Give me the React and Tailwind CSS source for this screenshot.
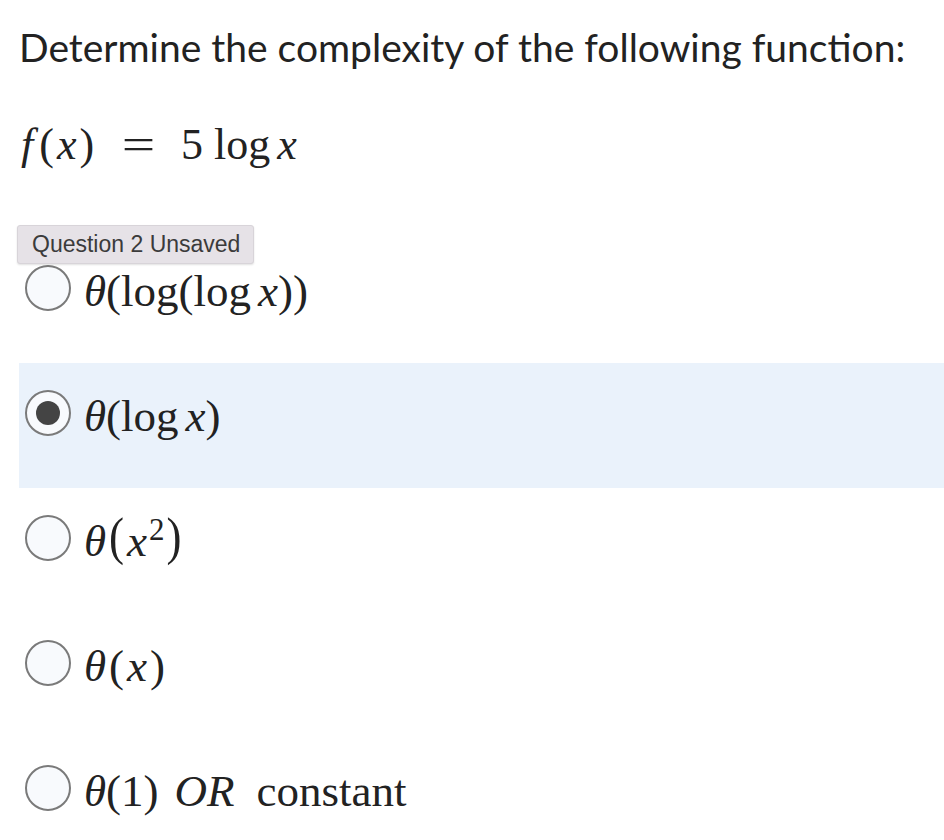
import React from 'react'

const serif = { fontFamily: '"Liberation Serif", "DejaVu Serif", serif' }

function V({ children }) {
  return <span className="italic">{children}</span>
}

function Radio({ checked }) {
  return (
    <span className="flex h-[46px] w-[46px] shrink-0 items-center justify-center rounded-full border-2 border-[#7a7a7a] bg-[#f8fafd]">
      {checked && <span className="h-[24px] w-[24px] rounded-full bg-[#444]" />}
    </span>
  )
}

const OPTIONS = [
  {
    id: 1,
    label: (
      <>
        <V>θ</V>(log(log<span className="ml-[7px]"><V>x</V></span>))
      </>
    )
  },
  {
    id: 2,
    checked: true,
    label: (
      <>
        <V>θ</V>(log<span className="ml-[7px]"><V>x</V></span>)
      </>
    )
  },
  {
    id: 3,
    label: (
      <>
        <V>θ</V>
        <span className="ml-[3px] inline-block origin-bottom scale-y-[1.18]">(</span>
        <span className="ml-[3px]"><V>x</V></span>
        <sup className="ml-[2px] mr-[2px] text-[31px]">2</sup>
        <span className="inline-block origin-bottom scale-y-[1.18]">)</span>
      </>
    )
  },
  {
    id: 4,
    label: (
      <>
        <V>θ</V><span className="ml-[3px]">(</span><span className="mx-[3px]"><V>x</V></span>)
      </>
    )
  },
  {
    id: 5,
    label: (
      <>
        <V>θ</V>(1)<span className="ml-[16px]"><V>OR</V></span>
        <span className="ml-[22px]">constant</span>
      </>
    )
  }
]

export default function App() {
  return (
    <div className="relative min-h-[840px] overflow-hidden bg-white pl-[19px] text-[#222]">
      <h1
        className="pt-[24px] text-[39px] leading-[1.2] text-[#222]"
        style={{ fontFamily: 'Lato, "Open Sans", sans-serif' }}
      >
        Determine the complexity of the following function:
      </h1>

      <div className="mt-[50px] flex items-baseline pl-[2px] text-[44px] leading-[48px]" style={serif}>
        <span>
          <V>f</V><span className="ml-[6px]">(</span><span className="mx-[3px]"><V>x</V></span>)
        </span>
        <span className="ml-[32px] inline-block scale-x-[1.35]">=</span>
        <span className="ml-[30px]">5 log<span className="ml-[7px]"><V>x</V></span></span>
      </div>

      <div className="mt-[69px]">
        {OPTIONS.map(o => (
          <div
            key={o.id}
            className={`flex h-[125px] items-start pl-[6px] pt-[27px] ${o.checked ? 'bg-[#eaf2fb]' : ''}`}
          >
            <Radio checked={o.checked} />
            <span className="ml-[13px] mt-[1px] whitespace-nowrap text-[45px] leading-[50px]" style={serif}>
              {o.label}
            </span>
          </div>
        ))}
      </div>

      <div
        className="absolute left-[17px] top-[225px] flex h-[39px] w-[237px] items-center rounded-[3px] border border-[#d8d4d9] bg-[#e6e2e7] pl-[14px] text-[23px] text-[#3b3b3b] shadow-[0_1px_2px_rgba(0,0,0,0.12)]"
        style={{ fontFamily: '"Liberation Sans", Arial, sans-serif' }}
      >
        Question 2 Unsaved
      </div>
    </div>
  )
}
